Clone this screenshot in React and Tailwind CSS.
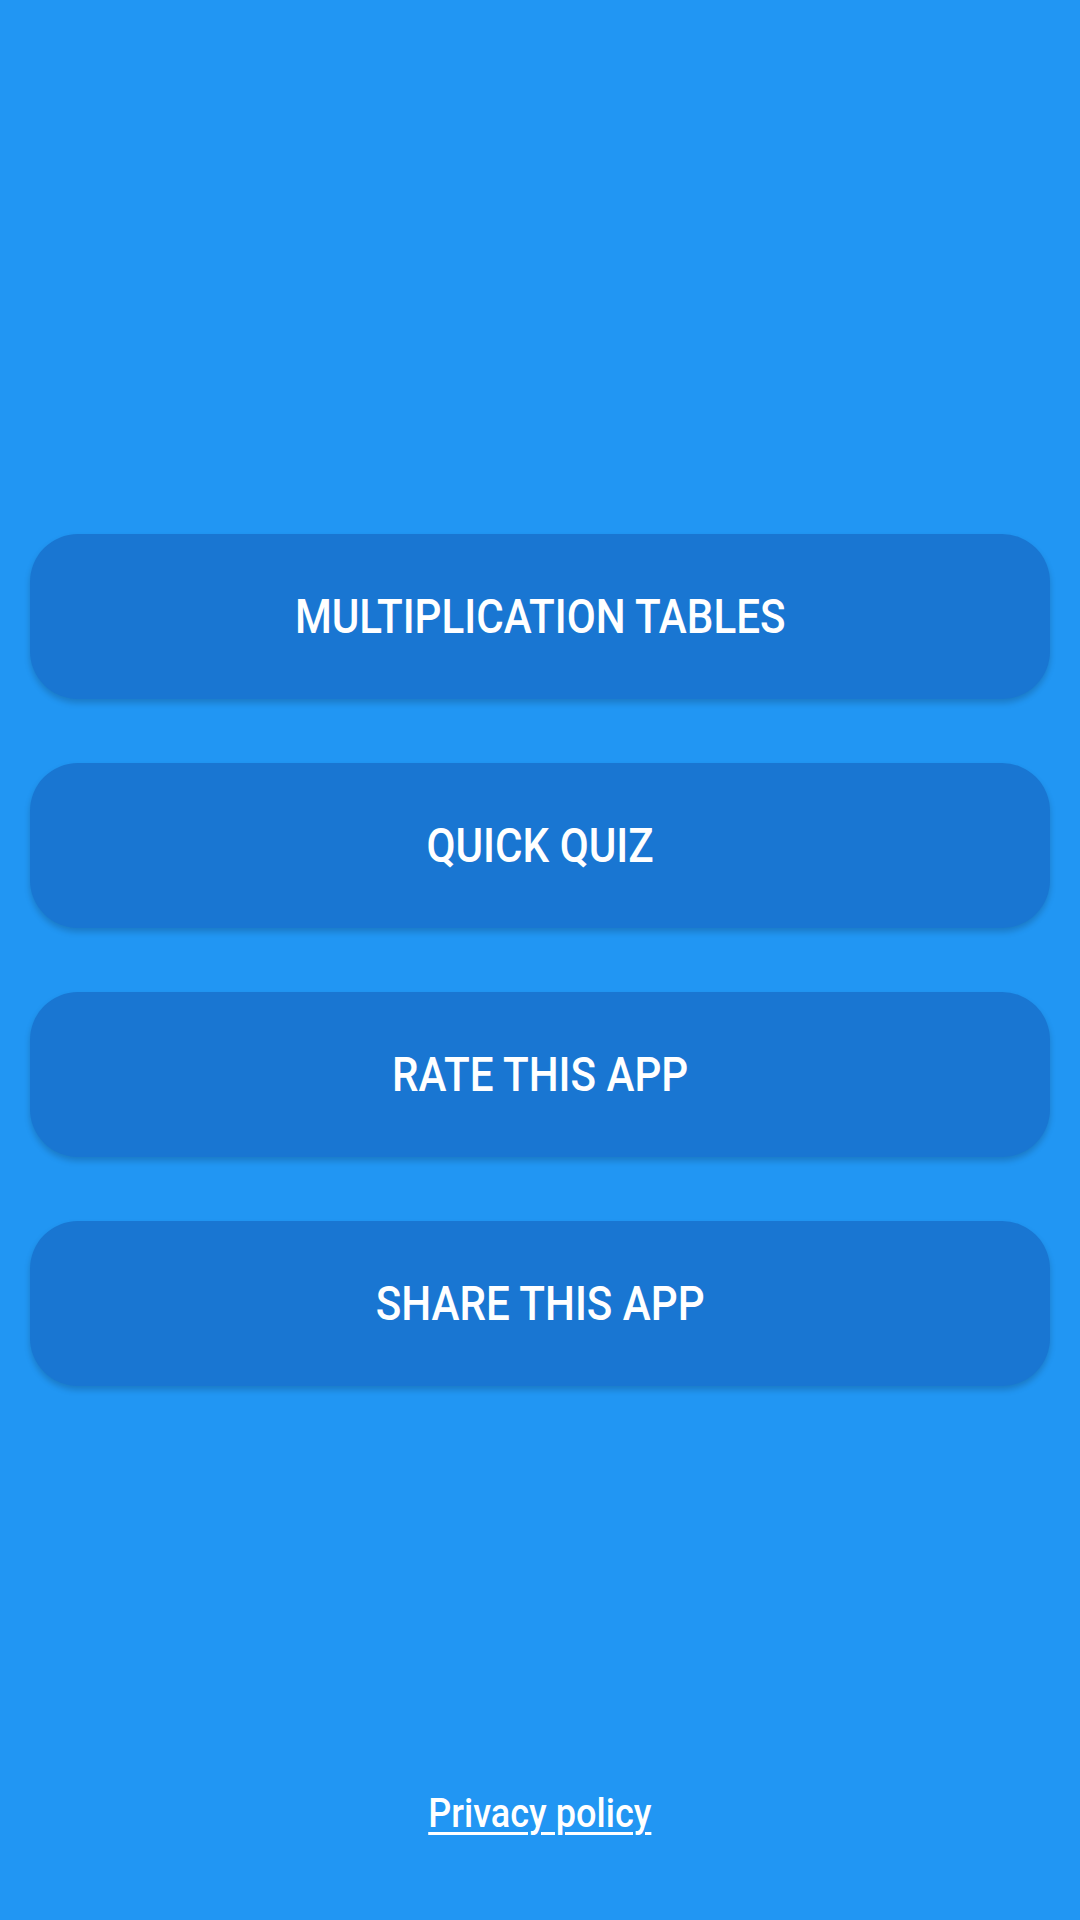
export default function App() {
  const items = ["MULTIPLICATION TABLES", "QUICK QUIZ", "RATE THIS APP", "SHARE THIS APP"];
  return (
    <div
      className="w-[1080px] h-[1920px] bg-[#2196F3] flex flex-col items-center pt-[534px]"
      style={{ fontFamily: "Roboto, 'Noto Sans', sans-serif" }}
    >
      <div className="flex flex-col gap-[64px] w-[1020px]">
        {items.map((label) => (
          <button
            key={label}
            className="h-[165px] w-full rounded-[48px] bg-[#1976D2] text-white text-[49px] font-medium leading-none flex items-center justify-center shadow-[0_4px_6px_rgba(0,0,0,0.18)]"
          >
            <span className="inline-block whitespace-nowrap scale-x-[0.86]">{label}</span>
          </button>
        ))}
      </div>
      <a className="mt-[403px] text-white text-[41px] leading-[48px] font-medium">
        <span className="inline-block whitespace-nowrap scale-x-[0.88] underline underline-offset-[5px] decoration-[3px]">
          Privacy policy
        </span>
      </a>
    </div>
  );
}
